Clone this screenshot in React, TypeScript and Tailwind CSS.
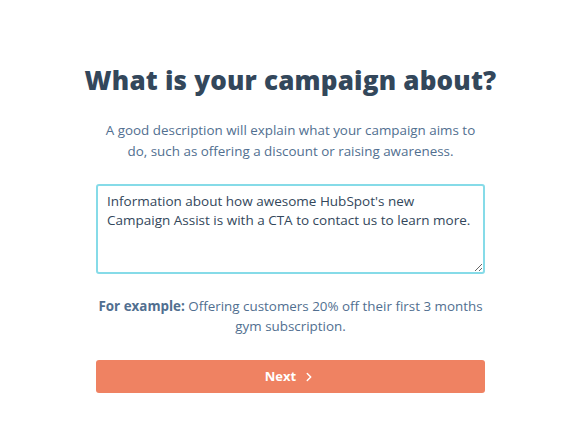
import React, { useState } from "react";
import { ChevronRight } from "lucide-react";

export default function App() {
  const [text, setText] = useState(
    "Information about how awesome HubSpot's new Campaign Assist is with a CTA to contact us to learn more."
  );

  return (
    <div
      className="min-h-screen bg-white flex justify-center"
      style={{ fontFamily: '"Open Sans", "Noto Sans", sans-serif' }}
    >
      <div className="w-[389px] ml-[3px] flex flex-col items-center pt-[62px]">
        <h1 className="text-[26px] leading-[36px] font-extrabold text-[#33475b] whitespace-nowrap tracking-[0.2px]">
          What is your campaign about?
        </h1>
        <p className="mt-[22px] w-full text-center text-[13.4px] leading-[21px] text-[#516f90]">
          A good description will explain what your campaign aims to do, such as offering a discount or raising awareness.
        </p>
        <textarea
          value={text}
          onChange={(e) => setText(e.target.value)}
          className="mt-[22px] w-full h-[90px] rounded-[3px] border-2 border-[#86dbe8] px-[9px] py-[6px] text-[13.5px] leading-[19px] text-[#33475b] outline-none resize-y"
        />
        <p className="mt-[22px] w-full text-center text-[13.4px] leading-[20px] text-[#516f90]">
          <span className="font-bold">For example:</span> Offering customers 20% off their first 3 months gym subscription.
        </p>
        <button className="mt-[24px] w-full h-[33px] rounded-[3px] bg-[#ef8262] text-white text-[13px] font-bold flex items-center justify-center gap-[6px]">
          Next
          <ChevronRight className="w-[14px] h-[14px]" strokeWidth={2.5} />
        </button>
      </div>
    </div>
  );
}
